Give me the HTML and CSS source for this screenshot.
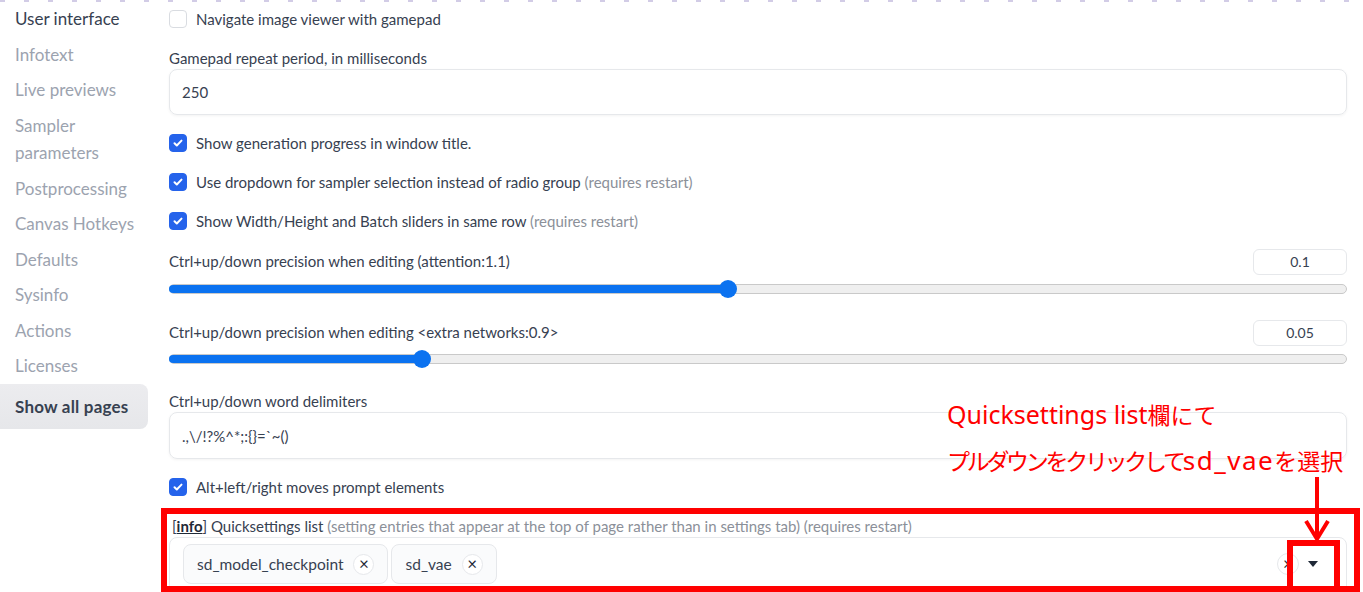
FILE: index.html
```html
<!DOCTYPE html>
<html lang="en">
<head>
  <meta charset="UTF-8" />
  <title>Settings</title>
  <link rel="stylesheet" href="styles.css">
</head>
<body>
  <div class="page">
    <nav class="sidebar">
      <div class="nav-item current">User interface</div>
      <div class="nav-item">Infotext</div>
      <div class="nav-item">Live previews</div>
      <div class="nav-item">Sampler parameters</div>
      <div class="nav-item">Postprocessing</div>
      <div class="nav-item">Canvas Hotkeys</div>
      <div class="nav-item">Defaults</div>
      <div class="nav-item">Sysinfo</div>
      <div class="nav-item">Actions</div>
      <div class="nav-item">Licenses</div>
      <div class="nav-item show-all">Show all pages</div>
    </nav>

    <main class="settings">
      <label class="check first"><span class="box"></span>Navigate image viewer with gamepad</label>

      <div class="field-label">Gamepad repeat period, in milliseconds</div>
      <div class="textbox">250</div>

      <label class="check gap-19"><span class="box on"></span>Show generation progress in window title.</label>
      <label class="check"><span class="box on"></span>Use dropdown for sampler selection instead of radio group <span class="muted">(requires restart)</span></label>
      <label class="check"><span class="box on"></span>Show Width/Height and Batch sliders in same row <span class="muted">(requires restart)</span></label>

      <div class="slider-head">
        <span class="slider-label">Ctrl+up/down precision when editing (attention:1.1)</span>
        <span class="number">0.1</span>
      </div>
      <div class="slider">
        <div class="track"></div>
        <div class="fill" style="width: 47.45%"></div>
        <div class="thumb" style="left: 47.45%"></div>
      </div>

      <div class="slider-head">
        <span class="slider-label">Ctrl+up/down precision when editing &lt;extra networks:0.9&gt;</span>
        <span class="number">0.05</span>
      </div>
      <div class="slider">
        <div class="track"></div>
        <div class="fill" style="width: 21.48%"></div>
        <div class="thumb" style="left: 21.48%"></div>
      </div>

      <div class="field-label delim">Ctrl+up/down word delimiters</div>
      <div class="textbox tall">.,\/!?%^*;:{}=`~()</div>

      <label class="check gap-19"><span class="box on"></span>Alt+left/right moves prompt elements</label>

      <div class="quick">
        <div class="info-label">[<b class="info">info</b>] Quicksettings list <span class="muted">(setting entries that appear at the top of page rather than in settings tab) (requires restart)</span></div>
        <div class="multiselect">
          <span class="chip">sd_model_checkpoint<span class="chip-x">&times;</span></span>
          <span class="chip">sd_vae<span class="chip-x">&times;</span></span>
          <span class="spacer"></span>
          <span class="clear-x">&times;</span>
          <svg class="caret" width="10" height="6" viewBox="0 0 10 6"><path d="M0 0h10L5 6z" fill="#1f2937"/></svg>
        </div>

        <div class="note">
          <div><span class="en">Quicksettings list</span>欄にて</div>
          <div><span class="kana">プルダウンをクリックして</span><span class="en wide">sd_vae</span>を選択</div>
        </div>
        <svg class="pointer" width="30" height="66" viewBox="0 0 30 66">
          <path d="M15 0V62" stroke="#ff0000" stroke-width="4" fill="none"/>
          <path d="M4 44L15 62L26 44" stroke="#ff0000" stroke-width="4" fill="none"/>
        </svg>
        <div class="mark-big"></div>
        <div class="mark-small"></div>
      </div>
    </main>
  </div>
</body>
</html>
```

FILE: styles.css
```css
body {
  margin: 0;
  height: 592px;
  overflow: hidden;
  font-family: Lato, "Noto Sans", sans-serif;
  color: #374151;
  background: repeating-linear-gradient(90deg, #d2cce6 0 5px, transparent 5px 24px) top left / 100% 2px no-repeat, #fff;
}

.page {
  display: flex;
}

.sidebar {
  width: 148px;
  flex-shrink: 0;
  padding-top: 1px;
}

.nav-item {
  padding: 4px 10px 4px 15px;
  font-size: 17px;
  line-height: 27.5px;
  color: #9ca3af;
}

.nav-item.current {
  color: #374151;
}

.nav-item.show-all {
  padding-top: 9px;
  padding-bottom: 9px;
  color: #374151;
  font-weight: 700;
  letter-spacing: 0.2px;
  background: linear-gradient(#ececef, #e6e7ea);
  border-radius: 0 8px 8px 0;
}

.settings {
  flex: 1;
  margin: 0 16px 0 21px;
}

.check {
  display: flex;
  align-items: center;
  height: 18px;
  margin-top: 21px;
  font-size: 15px;
  color: #374151;
  white-space: pre;
}

.check.first {
  margin-top: 10px;
}

.check.gap-19 {
  margin-top: 19px;
}

.box {
  width: 18px;
  height: 18px;
  box-sizing: border-box;
  margin-right: 9px;
  border: 1px solid #d9dce1;
  border-radius: 4px;
  background: #fff;
  flex-shrink: 0;
}

.box.on {
  border-color: #2563eb;
  background: #2563eb url("data:image/svg+xml,%3Csvg xmlns='http://www.w3.org/2000/svg' viewBox='0 0 16 16'%3E%3Cpath d='M4.5 8.2l2.3 2.3 4.7-4.9' stroke='white' stroke-width='2' fill='none' stroke-linecap='round' stroke-linejoin='round'/%3E%3C/svg%3E") center / 16px no-repeat;
}

.muted {
  color: #8b9099;
}

.field-label {
  margin-top: 20px;
  font-size: 15px;
  line-height: 20px;
}

.field-label.delim {
  margin-top: 23px;
}

.textbox {
  margin-top: 1px;
  height: 46px;
  box-sizing: border-box;
  padding: 0 12px;
  display: flex;
  align-items: center;
  font-size: 15px;
  border: 1px solid #e6e8eb;
  border-radius: 8px;
  box-shadow: 0 1px 3px rgba(0, 0, 0, 0.05);
}

.textbox.tall {
  height: 47px;
}

.slider-head {
  display: flex;
  justify-content: space-between;
  align-items: center;
  margin-top: 19px;
}

.slider + .slider-head {
  margin-top: 22px;
}

.slider-label {
  font-size: 15px;
  margin-top: -3px;
}

.number {
  width: 94px;
  height: 26px;
  box-sizing: border-box;
  border: 1px solid #e6e8eb;
  border-radius: 6px;
  font-size: 14px;
  line-height: 24px;
  text-align: center;
}

.slider {
  position: relative;
  height: 18px;
  margin-top: 5px;
}

.slider + .slider-head + .slider {
  margin-top: 4px;
}

.track {
  position: absolute;
  left: 0;
  right: 0;
  top: 4px;
  height: 10px;
  box-sizing: border-box;
  background: #efefef;
  border: 1px solid #c9c9c9;
  border-radius: 5px;
}

.fill {
  position: absolute;
  left: 0;
  top: 5px;
  height: 8px;
  background: #0b72f0;
  border-radius: 4px;
}

.thumb {
  position: absolute;
  top: 0;
  width: 18px;
  height: 18px;
  margin-left: -9px;
  border-radius: 50%;
  background: #0b72f0;
}

.quick {
  position: relative;
  margin-top: 20px;
}

.info-label {
  font-size: 15px;
  line-height: 20px;
  padding-left: 3px;
}

.info {
  text-decoration: underline;
  color: #1f2937;
}

.multiselect {
  margin-top: 1px;
  height: 60px;
  box-sizing: border-box;
  display: flex;
  align-items: flex-start;
  gap: 3px;
  padding: 6px 28px 0 13px;
  border: 1px solid #e6e8eb;
  border-radius: 8px;
}

.chip {
  display: flex;
  align-items: center;
  gap: 10px;
  height: 40px;
  box-sizing: border-box;
  padding: 0 13px 0 13px;
  font-size: 15.5px;
  background: #fafbfc;
  border: 1px solid #e6e8eb;
  border-radius: 8px;
}

.chip-x,
.clear-x {
  width: 21px;
  height: 21px;
  box-sizing: border-box;
  border: 1px solid #e6e8eb;
  border-radius: 50%;
  background: #fff;
  font-size: 17px;
  line-height: 18px;
  text-align: center;
  color: #1f2937;
}

.spacer {
  flex: 1;
}

.clear-x {
  width: 22px;
  height: 22px;
  margin-top: 9px;
  line-height: 19px;
}

.caret {
  margin: 17px 0 0 6px;
}

.note {
  position: absolute;
  left: 778px;
  top: -125px;
  font-family: "Noto Sans CJK JP", sans-serif;
  font-size: 23px;
  line-height: 46px;
  color: #ff0000;
  white-space: nowrap;
}

.note .en {
  font-family: "Noto Sans", "Noto Sans CJK JP", sans-serif;
  font-size: 25px;
}

.note .en.wide {
  font-size: 26px;
  letter-spacing: 1.5px;
}

.note .kana {
  letter-spacing: -3.3px;
}

.pointer {
  position: absolute;
  right: 15px;
  top: -39px;
}

.mark-big {
  position: absolute;
  left: -8px;
  right: -13px;
  top: -8px;
  height: 84px;
  box-sizing: border-box;
  border: 6px solid #ff0000;
}

.mark-small {
  position: absolute;
  right: 7px;
  top: 24px;
  width: 53px;
  height: 52px;
  box-sizing: border-box;
  border: 6px solid #ff0000;
}
```
